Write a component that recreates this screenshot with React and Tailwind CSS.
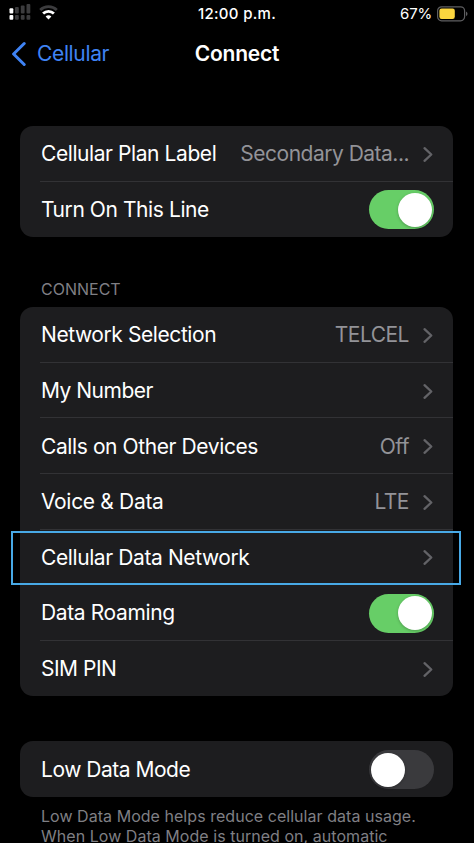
import React, { useState } from 'react';

const lineRows = [
  { label: 'Cellular Plan Label', value: 'Secondary Data...', tracking: 'tracking-[-0.42px]' },
  { label: 'Turn On This Line', toggle: true, on: true, tracking: 'tracking-[-0.42px]' },
];

const connectRows = [
  { label: 'Network Selection', value: 'TELCEL', tracking: 'tracking-[-0.42px]' },
  { label: 'My Number', tracking: 'tracking-[-0.5px]' },
  { label: 'Calls on Other Devices', value: 'Off', tracking: 'tracking-[-0.4px]' },
  { label: 'Voice & Data', value: 'LTE', tracking: 'tracking-[-0.32px]' },
  { label: 'Cellular Data Network', highlighted: true, tracking: 'tracking-[-0.4px]' },
  { label: 'Data Roaming', toggle: true, on: true, tracking: 'tracking-[-0.37px]' },
  { label: 'SIM PIN', tracking: 'tracking-[-0.5px]' },
];

const dataModeRows = [{ label: 'Low Data Mode', toggle: true, on: false, tracking: 'tracking-[-0.48px]' }];

export default function App() {
  return (
    <div className="h-[843px] w-[474px] overflow-hidden bg-black font-['Inter',sans-serif] text-white">
      <StatusBar />
      <NavBar />

      <main className="pt-[45px] pl-5 pr-[21px]">
        <Group rows={lineRows} />
        <h2 className="mt-[42px] mb-2 pl-[21px] text-[16px] leading-5 text-[#7f7f84]">CONNECT</h2>
        <Group rows={connectRows} />
        <div className="mt-[45px]">
          <Group rows={dataModeRows} />
        </div>
        <p className="mt-[9px] pl-[21px] text-[16px] leading-5 tracking-[0.04px] whitespace-nowrap text-[#7f7f84]">
          Low Data Mode helps reduce cellular data usage.
          <br />
          When Low Data Mode is turned on, automatic
        </p>
      </main>
    </div>
  );
}

function StatusBar() {
  return (
    <div className="grid h-[27px] grid-cols-3 items-center">
      <div className="flex items-center pb-[3px] pl-[9px]">
        <SignalIcon />
        <WifiIcon />
      </div>
      <span className="text-center text-[15px] leading-5 font-medium tracking-[0.3px]">12:00 p.m.</span>
      <div className="flex items-center justify-end gap-[5px] pr-[6px]">
        <span className="text-[15px] leading-5 tracking-[-0.2px]">67%</span>
        <BatteryIcon />
      </div>
    </div>
  );
}

function NavBar() {
  return (
    <header className="grid h-[54px] grid-cols-3 items-center">
      <button className="flex items-center gap-2.5 pl-[11px] text-[#3f83f4]">
        <svg width="15" height="26" viewBox="0 0 15 26" fill="none" stroke="currentColor" strokeWidth="3" strokeLinecap="round" strokeLinejoin="round">
          <path d="M13.2 2.5 2.6 13l10.6 10.5" />
        </svg>
        <span className="pl-px text-[21px] leading-7 tracking-[-0.35px]">Cellular</span>
      </button>
      <h1 className="text-center text-[21px] leading-7 font-semibold tracking-[-0.2px]">Connect</h1>
    </header>
  );
}

function Group({ rows }) {
  return (
    <section className="rounded-[13px] bg-[#1d1d1f]">
      {rows.map((row, i) => (
        <Row key={row.label} {...row} divided={i < rows.length - 1} />
      ))}
    </section>
  );
}

function Row({ label, value, toggle, on, highlighted, divided, tracking }) {
  const [checked, setChecked] = useState(on);

  return (
    <div className="relative h-[55.6px] pl-5">
      <div
        className={`flex h-full items-center justify-between border-b pt-0.5
          ${divided ? 'border-[#323235]' : 'border-transparent'}
          ${toggle ? 'pr-[19px]' : 'pr-5'}
        `}
      >
        <span className={`pl-px text-[21px] leading-7 whitespace-nowrap ${tracking}`}>{label}</span>
        {toggle ? (
          <Toggle label={label} checked={checked} onChange={() => setChecked(!checked)} />
        ) : (
          <span className="flex items-center gap-[13px] text-[21px] leading-7 tracking-[-0.5px] whitespace-nowrap text-[#939398]">
            {value}
            <Chevron />
          </span>
        )}
      </div>
      {highlighted && (
        <div className="pointer-events-none absolute top-[1.4px] -right-2 -left-[9px] h-[54px] border-2 border-[#48a9e6]" />
      )}
    </div>
  );
}

function Toggle({ label, checked, onChange }) {
  return (
    <button
      role="switch"
      aria-label={label}
      aria-checked={checked}
      onClick={onChange}
      className={`flex h-[39px] w-[65px] items-center rounded-full pr-[2.5px] pl-[2px]
        ${checked ? 'justify-end bg-[#67ce67]' : 'justify-start bg-[#3a3a3d]'}
      `}
    >
      <span className="size-[34px] rounded-full bg-white shadow-[0_1px_3px_rgba(0,0,0,0.25)]" />
    </button>
  );
}

function Chevron() {
  return (
    <svg width="11" height="17" viewBox="0 0 11 17" fill="none" stroke="#636367" strokeWidth="2.3" strokeLinecap="round" strokeLinejoin="round">
      <path d="M2.5 2.2l6.8 6.3-6.8 6.3" />
    </svg>
  );
}

// Dual SIM signal: main line on top, secondary line as dots below.
function SignalIcon() {
  return (
    <svg width="22" height="17" viewBox="0 0 22 17" fill="#3c3c3e">
      <rect x="0.5" y="4.2" width="3.8" height="5.3" rx="1" fill="#fff" />
      <rect x="6" y="3" width="3.8" height="6.5" rx="1" />
      <rect x="11.8" y="1.5" width="3.8" height="8" rx="1" />
      <rect x="17.5" y="0" width="3.8" height="9.5" rx="1" />
      <rect x="0.5" y="11" width="3.8" height="4.7" rx="1" fill="#fff" />
      <rect x="6" y="11" width="3.8" height="4.7" rx="1" />
      <rect x="11.8" y="11" width="3.8" height="4.7" rx="1" />
      <rect x="17.5" y="11" width="3.8" height="4.7" rx="1" />
    </svg>
  );
}

function WifiIcon() {
  return (
    <svg className="ml-2" width="19" height="15" viewBox="0 0 19 15" fill="none" strokeWidth="2.8">
      <path d="M1.2 5a12 12 0 0 1 16.6 0" stroke="#3c3c3e" />
      <path d="M4.1 8.5a7.8 7.8 0 0 1 10.8 0" stroke="#fff" />
      <path d="M9.5 14.4 6.6 11.6a4.2 4.2 0 0 1 5.8 0Z" fill="#fff" />
    </svg>
  );
}

function BatteryIcon() {
  return (
    <svg width="31" height="16" viewBox="0 0 31 16">
      <rect x="0.6" y="0.8" width="27" height="14" rx="4" fill="none" stroke="#5f5f61" strokeWidth="1.2" />
      <rect x="2.4" y="2.6" width="15.4" height="10.4" rx="2.2" fill="#fbd63f" />
      <path d="M29 5.5v4.6a2.5 2.5 0 0 0 0-4.6Z" fill="#5f5f61" />
    </svg>
  );
}
